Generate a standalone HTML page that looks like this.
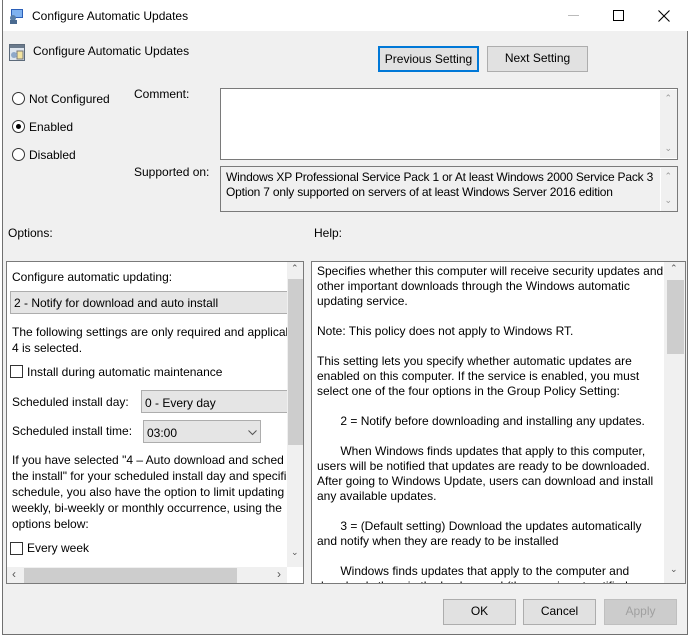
<!DOCTYPE html>
<html><head><meta charset="utf-8"><style>
*{margin:0;padding:0;box-sizing:border-box}
body{width:690px;height:636px;background:#fff;position:relative;overflow:hidden;font-family:"Liberation Sans",sans-serif;font-size:12px;color:#000}
.a{position:absolute;white-space:nowrap}
#win{position:absolute;left:2px;top:0;width:686px;height:635px;background:#f0f0f0;border:1px solid #707070;border-top:none}
.box{position:absolute;border:1px solid #7a7a7a;background:#fff}
.btn{position:absolute;border:1px solid #adadad;background:#e1e1e1;text-align:center;line-height:23px}
.rad{position:absolute;width:13px;height:13px;border:1px solid #333;border-radius:50%;background:#fff}
.chk{position:absolute;width:13px;height:13px;border:1px solid #333;background:#fff}
.combo{position:absolute;background:#e5e5e5;border:1px solid #adadad}
.sa{position:absolute;color:#9a9a9a;font-size:9px}
</style></head><body>
<div id="win">
 <div class="a" style="left:0;top:0;width:685px;height:31px;background:#fff"></div>
</div>
<svg class="a" style="left:8px;top:8px" width="16" height="16"><rect x="3" y="1" width="12" height="9" fill="#2b5fb8"/><rect x="4" y="2" width="10" height="7" fill="#7fb2f0"/><circle cx="5" cy="10" r="3" fill="#5a7fa8"/><rect x="2" y="12" width="7" height="4" fill="#4a6a90"/></svg>
<div class="a" style="left:32px;top:9px">Configure Automatic Updates</div>
<div class="a" style="left:568px;top:15px;width:11px;height:1px;background:#bbb"></div>
<div class="a" style="left:613px;top:10px;width:11px;height:11px;border:1px solid #000"></div>
<svg class="a" style="left:658px;top:10px" width="12" height="12"><path d="M0.5 0.5L11.5 11.5M11.5 0.5L0.5 11.5" stroke="#000" stroke-width="1.1"/></svg>
<svg class="a" style="left:9px;top:44px" width="16" height="17"><rect x="0.5" y="0.5" width="15" height="16" fill="#dfe6ee" stroke="#5c6a7a"/><rect x="1" y="1" width="14" height="3" fill="#6a7a8c"/><rect x="8" y="7" width="6" height="8" fill="#f4e4a0" stroke="#777"/><circle cx="5" cy="11" r="3" fill="#8fa8c8"/></svg>
<div class="a" style="left:33px;top:44px">Configure Automatic Updates</div>
<div class="btn" style="left:378px;top:46px;width:101px;height:26px;border:2px solid #0078d7;line-height:22px">Previous Setting</div>
<div class="btn" style="left:487px;top:46px;width:101px;height:26px">Next Setting</div>
<div class="rad" style="left:12px;top:92px"></div><div class="a" style="left:29px;top:92px">Not Configured</div>
<div class="rad" style="left:12px;top:120px"></div><div class="a" style="left:16px;top:124px;width:5px;height:5px;border-radius:50%;background:#000"></div><div class="a" style="left:29px;top:120px">Enabled</div>
<div class="rad" style="left:12px;top:148px"></div><div class="a" style="left:29px;top:148px">Disabled</div>
<div class="a" style="left:134px;top:87px">Comment:</div>
<div class="box" style="left:220px;top:88px;width:458px;height:72px"><div class="a" style="right:0;top:1px;width:17px;height:68px;background:#f0f0f0"></div><div class="sa" style="right:5px;top:4px">&#8963;</div><div class="sa" style="right:5px;top:54px">&#8964;</div></div>
<div class="a" style="left:134px;top:165px">Supported on:</div>
<div class="box" style="left:220px;top:166px;width:458px;height:46px;background:#f0f0f0"><div class="a" style="right:0;top:1px;width:17px;height:43px;background:#f0f0f0;border-left:1px solid #fff"></div><div class="sa" style="right:5px;top:4px">&#8963;</div><div class="sa" style="right:5px;top:28px">&#8964;</div>
<div class="a" style="left:5px;top:3px;line-height:15px;letter-spacing:-0.2px">Windows XP Professional Service Pack 1 or At least Windows 2000 Service Pack 3<br>Option 7 only supported on servers of at least Windows Server 2016 edition</div></div>
<div class="a" style="left:8px;top:226px">Options:</div>
<div class="a" style="left:314px;top:226px">Help:</div>
<div class="box" style="left:6px;top:261px;width:298px;height:323px;overflow:hidden">
 <div class="a" style="left:5px;top:8px">Configure automatic updating:</div>
 <div class="combo" style="left:3px;top:29px;width:280px;height:23px;border-right:none"><div class="a" style="left:3px;top:4px">2 - Notify for download and auto install</div></div>
 <div class="a" style="left:5px;top:62px;line-height:16px">The following settings are only required and applical<br>4 is selected.</div>
 <div class="chk" style="left:3px;top:103px"></div><div class="a" style="left:20px;top:103px">Install during automatic maintenance</div>
 <div class="a" style="left:5px;top:133px">Scheduled install day:</div>
 <div class="combo" style="left:134px;top:128px;width:150px;height:23px;border-right:none"><div class="a" style="left:3px;top:5px">0 - Every day</div></div>
 <div class="a" style="left:5px;top:162px">Scheduled install time:</div>
 <div class="combo" style="left:136px;top:158px;width:118px;height:23px"><div class="a" style="left:3px;top:5px">03:00</div><svg class="a" style="left:104px;top:9px" width="9" height="6"><path d="M0.5 0.5L4.5 4.5L8.5 0.5" fill="none" stroke="#555"/></svg></div>
 <div class="a" style="left:5px;top:190px;line-height:16px">If you have selected "4 – Auto download and sched<br>the install" for your scheduled install day and specifi<br>schedule, you also have the option to limit updating<br>weekly, bi-weekly or monthly occurrence, using the<br>options below:</div>
 <div class="chk" style="left:3px;top:280px"></div><div class="a" style="left:20px;top:279px">Every week</div>
 <div class="a" style="left:280px;top:0;width:16px;height:305px;background:#f0f0f0"></div>
 <div class="a" style="left:281px;top:17px;width:15px;height:166px;background:#cdcdcd"></div>
 <div class="a" style="left:284px;top:1px;color:#555;font-size:9px">&#8963;</div>
 <div class="a" style="left:284px;top:285px;color:#555;font-size:9px">&#8964;</div>
 <div class="a" style="left:0;top:305px;width:280px;height:16px;background:#f0f0f0"></div>
 <div class="a" style="left:17px;top:306px;width:213px;height:15px;background:#cdcdcd"></div>
 <div class="a" style="left:5px;top:305px;color:#555;font-size:12px">&lsaquo;</div>
 <div class="a" style="left:270px;top:305px;color:#555;font-size:12px">&rsaquo;</div>
</div>
<div class="box" style="left:311px;top:261px;width:375px;height:323px;overflow:hidden">
 <div class="a" style="left:5px;top:2px;line-height:15px">Specifies whether this computer will receive security updates and<br>other important downloads through the Windows automatic<br>updating service.<br><br>Note: This policy does not apply to Windows RT.<br><br>This setting lets you specify whether automatic updates are<br>enabled on this computer. If the service is enabled, you must<br>select one of the four options in the Group Policy Setting:<br><br>&nbsp;&nbsp;&nbsp;&nbsp;&nbsp;&nbsp;&nbsp;2 = Notify before downloading and installing any updates.<br><br>&nbsp;&nbsp;&nbsp;&nbsp;&nbsp;&nbsp;&nbsp;When Windows finds updates that apply to this computer,<br>users will be notified that updates are ready to be downloaded.<br>After going to Windows Update, users can download and install<br>any available updates.<br><br>&nbsp;&nbsp;&nbsp;&nbsp;&nbsp;&nbsp;&nbsp;3 = (Default setting) Download the updates automatically<br>and notify when they are ready to be installed<br><br>&nbsp;&nbsp;&nbsp;&nbsp;&nbsp;&nbsp;&nbsp;Windows finds updates that apply to the computer and<br>downloads them in the background (the user is not notified</div>
 <div class="a" style="left:352px;top:0;width:22px;height:322px;background:#f0f0f0"></div>
 <div class="a" style="left:355px;top:18px;width:17px;height:74px;background:#cdcdcd"></div>
 <div class="a" style="left:358px;top:1px;color:#555;font-size:9px">&#8963;</div>
 <div class="a" style="left:358px;top:302px;color:#555;font-size:9px">&#8964;</div>
</div>
<div class="btn" style="left:443px;top:599px;width:73px;height:26px">OK</div>
<div class="btn" style="left:523px;top:599px;width:73px;height:26px">Cancel</div>
<div class="btn" style="left:604px;top:599px;width:73px;height:26px;background:#ccc;border-color:#bfbfbf;color:#a0a0a0">Apply</div>
</body></html>
